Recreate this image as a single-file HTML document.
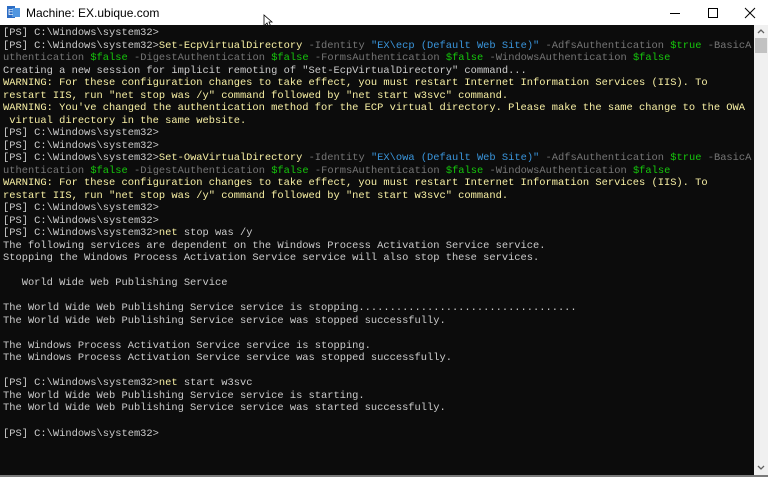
<!DOCTYPE html>
<html><head><meta charset="utf-8"><style>
html,body{margin:0;padding:0;width:768px;height:477px;overflow:hidden;background:#fff}
.title{position:absolute;left:0;top:0;width:768px;height:25px;background:#fff;font-family:"Liberation Sans",sans-serif;font-size:12px;color:#000}
.title .t{position:absolute;left:26px;top:6px}
.icon{position:absolute;left:7px;top:5px;width:13px;height:14px}
.con{position:absolute;left:0;top:25px;width:754px;height:450px;background:#0c0c0c;overflow:hidden}
pre{margin:0;padding:2px 0 0 3px;font-family:"Liberation Mono",monospace;font-size:10.4px;line-height:12.52px;color:#cccccc;white-space:pre}
.y{color:#f9f1a5}.g{color:#767676}.b{color:#3a96dd}.v{color:#16c60c}
.sb{position:absolute;left:754px;top:25px;width:14px;height:450px;background:#f0f0f0}
.thumb{position:absolute;left:755px;top:38px;width:12px;height:15px;background:#c2c2c2}
.bot{position:absolute;left:0;top:475px;width:768px;height:2px;background:#7a7a7a}
</style></head><body>
<div class="title">
<svg class="icon" viewBox="0 0 13 14"><rect x="0" y="1" width="8" height="12" fill="#2b6cc4"/><rect x="5" y="3" width="8" height="9" fill="#4f95e0"/><text x="1" y="10" font-size="8" fill="#fff" font-family="Liberation Sans">E</text></svg>
<span class="t">Machine: EX.ubique.com</span>
<svg style="position:absolute;left:263px;top:14px" width="10" height="15" viewBox="0 0 10 15"><path d="M1 1 L1 12 L4 9 L6 14 L8 13 L6 8 L9 8 Z" fill="#fff" stroke="#000" stroke-width="0.8"/></svg>
<svg style="position:absolute;left:668px;top:6px" width="14" height="14"><path d="M2 7.5 H12" stroke="#000" stroke-width="1"/></svg>
<svg style="position:absolute;left:706px;top:6px" width="14" height="14"><rect x="2.5" y="2.5" width="9" height="9" fill="none" stroke="#000"/></svg>
<svg style="position:absolute;left:743px;top:6px" width="14" height="14"><path d="M2 2 L12 12 M12 2 L2 12" stroke="#000"/></svg>
</div>
<div class="con"><pre>[PS] C:\Windows\system32>
[PS] C:\Windows\system32><span class="y">Set-EcpVirtualDirectory</span> <span class="g">-Identity</span> <span class="b">"EX\ecp (Default Web Site)"</span> <span class="g">-AdfsAuthentication</span> <span class="v">$true</span> <span class="g">-BasicA</span>
<span class="g">uthentication</span> <span class="v">$false</span> <span class="g">-DigestAuthentication</span> <span class="v">$false</span> <span class="g">-FormsAuthentication</span> <span class="v">$false</span> <span class="g">-WindowsAuthentication</span> <span class="v">$false</span>
Creating a new session for implicit remoting of "Set-EcpVirtualDirectory" command...
<span class="y">WARNING: For these configuration changes to take effect, you must restart Internet Information Services (IIS). To
restart IIS, run "net stop was /y" command followed by "net start w3svc" command.
WARNING: You've changed the authentication method for the ECP virtual directory. Please make the same change to the OWA
 virtual directory in the same website.</span>
[PS] C:\Windows\system32>
[PS] C:\Windows\system32>
[PS] C:\Windows\system32><span class="y">Set-OwaVirtualDirectory</span> <span class="g">-Identity</span> <span class="b">"EX\owa (Default Web Site)"</span> <span class="g">-AdfsAuthentication</span> <span class="v">$true</span> <span class="g">-BasicA</span>
<span class="g">uthentication</span> <span class="v">$false</span> <span class="g">-DigestAuthentication</span> <span class="v">$false</span> <span class="g">-FormsAuthentication</span> <span class="v">$false</span> <span class="g">-WindowsAuthentication</span> <span class="v">$false</span>
<span class="y">WARNING: For these configuration changes to take effect, you must restart Internet Information Services (IIS). To
restart IIS, run "net stop was /y" command followed by "net start w3svc" command.</span>
[PS] C:\Windows\system32>
[PS] C:\Windows\system32>
[PS] C:\Windows\system32><span class="y">net</span> stop was /y
The following services are dependent on the Windows Process Activation Service service.
Stopping the Windows Process Activation Service service will also stop these services.

   World Wide Web Publishing Service

The World Wide Web Publishing Service service is stopping...................................
The World Wide Web Publishing Service service was stopped successfully.

The Windows Process Activation Service service is stopping.
The Windows Process Activation Service service was stopped successfully.

[PS] C:\Windows\system32><span class="y">net</span> start w3svc
The World Wide Web Publishing Service service is starting.
The World Wide Web Publishing Service service was started successfully.

[PS] C:\Windows\system32></pre></div>
<div class="sb"></div>
<svg style="position:absolute;left:755px;top:27px" width="12" height="10"><path d="M3 6 L6 3 L9 6" fill="none" stroke="#606060" stroke-width="1.3"/></svg>
<div class="thumb"></div>
<svg style="position:absolute;left:755px;top:463px" width="12" height="10"><path d="M3 3 L6 6 L9 3" fill="none" stroke="#606060" stroke-width="1.3"/></svg>
<div class="bot"></div>
</body></html>
